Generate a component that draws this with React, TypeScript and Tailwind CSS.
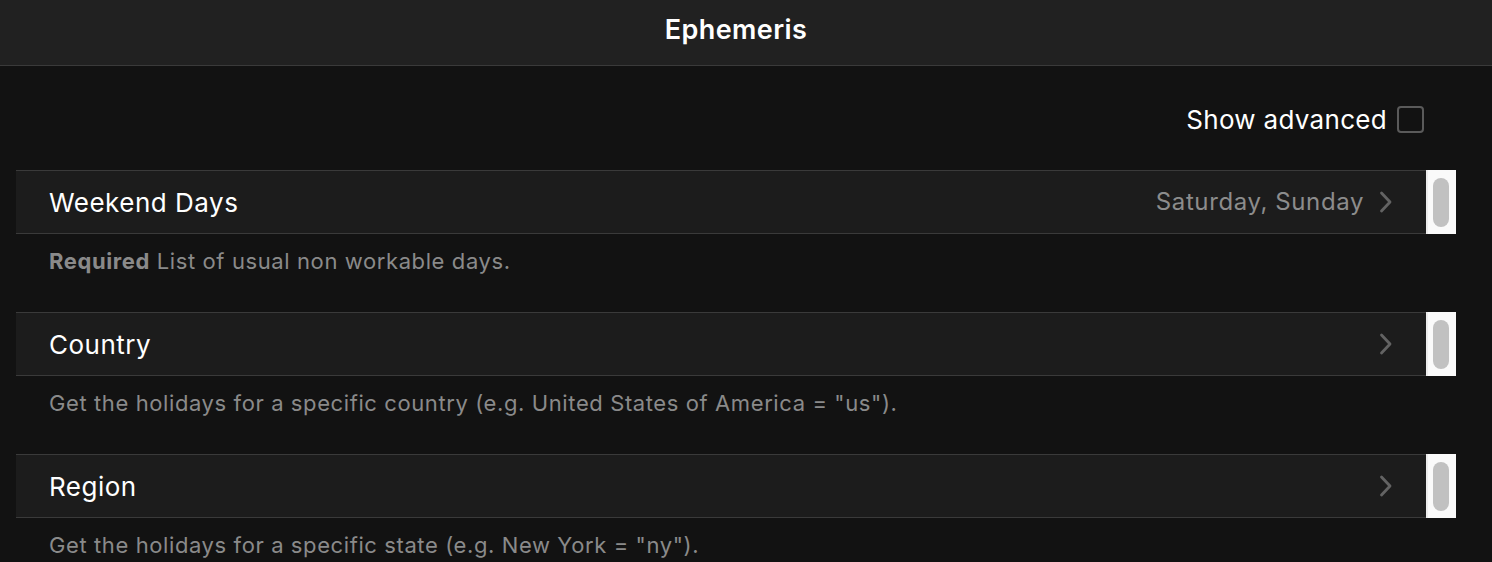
import React from "react";

function Chevron() {
  return (
    <svg width="14" height="24" viewBox="0 0 14 24" fill="none" className="shrink-0">
      <path d="M2.5 3 L11 12 L2.5 21" stroke="#636363" strokeWidth="2.8" strokeLinecap="round" strokeLinejoin="round" />
    </svg>
  );
}

function Setting({ label, value, desc }: { label: string; value?: string; desc: React.ReactNode }) {
  return (
    <div className="flex flex-col">
      <div className="flex h-[64px] pl-[16px] pr-[36px]">
        <div className="flex flex-1 items-center border-y border-[#3a3a3a] bg-[#1c1c1c] pl-[33px] pr-[33px]">
          <span className="flex-1 text-[26px] text-white tracking-[0.5px]">{label}</span>
          {value && <span className="mr-[15px] text-[24px] text-[#8c8c8c] tracking-[0.6px]">{value}</span>}
          <Chevron />
        </div>
        <div className="flex w-[30px] bg-[#fafafa]">
          <div className="w-[2px] bg-[#ececec]" />
          <div className="flex flex-1 items-center justify-center pr-[2px]">
            <div className="h-[49px] w-[16px] rounded-full bg-[#c1c1c1]" />
          </div>
        </div>
      </div>
      <div className="h-[78px] pl-[49px] pt-[11px] text-[22px] text-[#8a8a8a] tracking-[0.6px]">{desc}</div>
    </div>
  );
}

export default function App() {
  return (
    <div className="min-h-[562px] w-full bg-[#121212]" style={{ fontFamily: "Inter, 'Noto Sans', sans-serif" }}>
      <div className="flex h-[66px] items-center justify-center border-b border-[#3a3a3a] bg-[#212121] pb-[4px] pr-[20px]">
        <span className="text-[27px] font-semibold text-white tracking-[0.4px]">Ephemeris</span>
      </div>
      <div className="flex h-[104px] items-center justify-end pr-[68px] pt-[2px]">
        <span className="text-[26px] text-white tracking-[0.3px]">Show advanced</span>
        <div className="ml-[10px] h-[27px] w-[27px] rounded-[4px] border-2 border-[#5a5a5a]" />
      </div>
      <Setting
        label="Weekend Days"
        value="Saturday, Sunday"
        desc={
          <>
            <span className="font-bold">Required</span> List of usual non workable days.
          </>
        }
      />
      <Setting label="Country" desc={'Get the holidays for a specific country (e.g. United States of America = "us").'} />
      <Setting label="Region" desc={'Get the holidays for a specific state (e.g. New York = "ny").'} />
    </div>
  );
}
